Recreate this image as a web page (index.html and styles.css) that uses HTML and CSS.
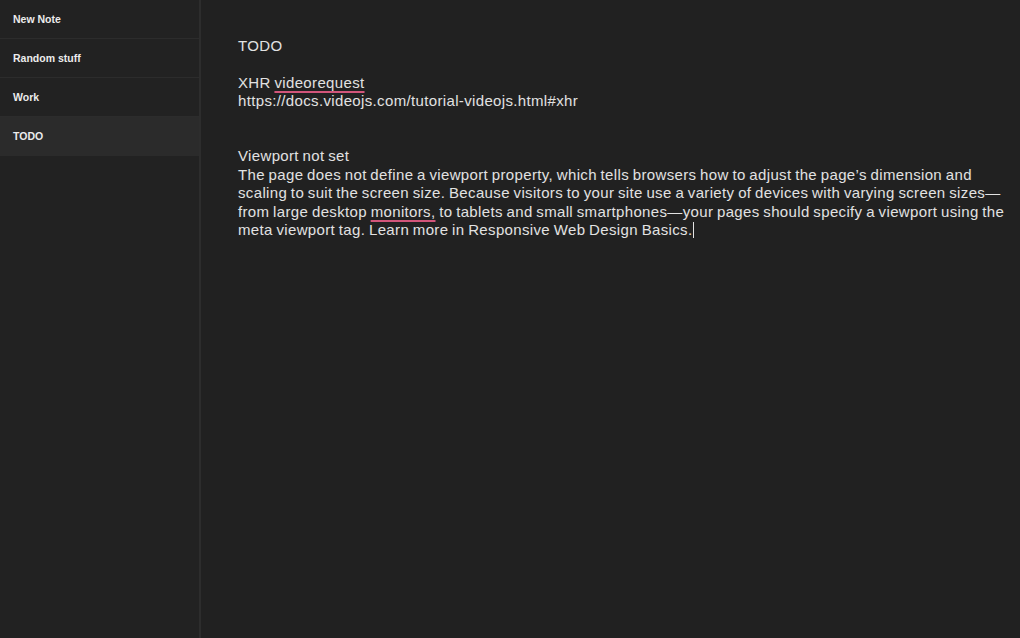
FILE: index.html
```html
<!DOCTYPE html>
<html>
<head>
<meta charset="utf-8">
<link rel="stylesheet" href="styles.css">
</head>
<body>
<div class="app">
  <aside class="sidebar">
    <div class="item">New Note</div>
    <div class="item">Random stuff</div>
    <div class="item">Work</div>
    <div class="item active">TODO</div>
  </aside>
  <main class="editor">
    <div class="line">TODO</div>
    <div class="line blank"></div>
    <div class="line">XHR <span class="spell">videorequest</span></div>
    <div class="line">https://docs.videojs.com/tutorial-videojs.html#xhr</div>
    <div class="line blank"></div>
    <div class="line blank"></div>
    <div class="line">Viewport not set</div>
    <div class="para">The page does not define a viewport property, which tells browsers how to adjust the page’s dimension and scaling to suit the screen size. Because visitors to your site use a variety of devices with varying screen sizes—from large desktop <span class="spell">monitors,</span> to tablets and small smartphones—your pages should specify a viewport using the meta viewport tag. Learn more in Responsive Web Design Basics.<span class="caret"></span></div>
  </main>
</div>
</body>
</html>
```
FILE: styles.css
```css
html, body {
  margin: 0;
  padding: 0;
  height: 100%;
  background: #212121;
}
.app {
  display: flex;
  height: 638px;
  width: 1020px;
  font-family: "Liberation Sans", Arial, sans-serif;
}
.sidebar {
  width: 199px;
  flex: none;
  background: #222222;
  border-right: 2px solid #2d2d2d;
  display: flex;
  flex-direction: column;
}
.item {
  height: 38px;
  border-bottom: 1px solid #2c2c2c;
  display: flex;
  align-items: center;
  padding-left: 13px;
  font-size: 10.5px;
  font-weight: bold;
  color: #ececec;
}
.item.active {
  background: #2b2b2b;
  border-bottom-color: #2b2b2b;
}
.editor {
  flex: 1;
  padding: 37px 0 0 37px;
  color: #e2e2e2;
  font-size: 15px;
  letter-spacing: 0.35px;
  word-spacing: -0.8px;
  line-height: 18.4px;
  background: #212121;
  overflow: hidden;
}
.line {
  white-space: nowrap;
}
.line.blank {
  height: 18.4px;
}
.para {
  width: 780px;
}
.spell {
  text-decoration: underline;
  text-decoration-color: #d2557a;
  text-decoration-thickness: 2px;
  text-underline-offset: 3px;
}
.caret {
  display: inline-block;
  width: 1px;
  height: 16px;
  background: #e2e2e2;
  vertical-align: -3px;
  margin-left: 1px;
}
```
